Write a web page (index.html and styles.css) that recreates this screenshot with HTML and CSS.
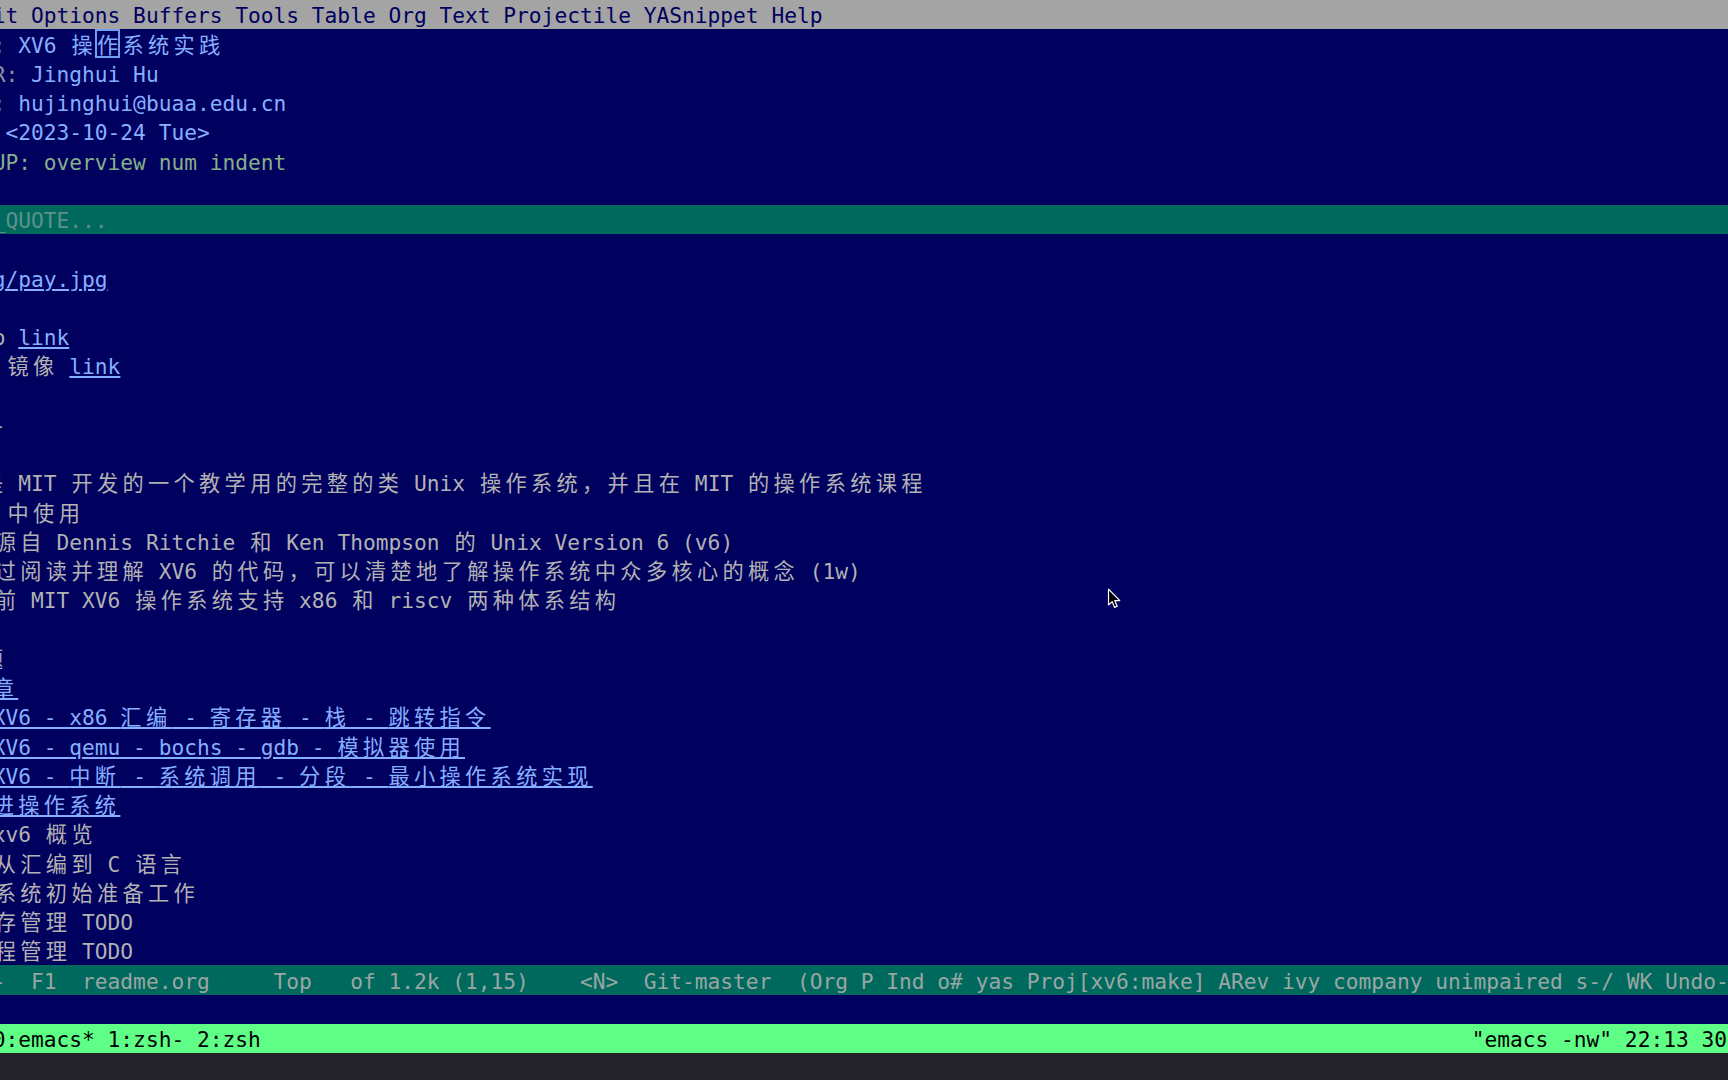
FILE: index.html
```html
<!DOCTYPE html>
<html lang="zh">
<head>
<meta charset="utf-8">
<title>emacs - readme.org</title>
<link rel="stylesheet" href="styles.css">
</head>
<body>
<div class="row menu">it Options Buffers Tools Table Org Text Projectile YASnippet Help</div>
<div class="row"><span class="k">:</span> <span class="t">XV6 <span class="w">操</span><span class="cur"><span class="w">作</span></span><span class="w">系统实践</span></span></div>
<div class="row"><span class="k">R:</span> <span class="t">Jinghui Hu</span></div>
<div class="row"><span class="k">:</span> <span class="t">hujinghui@buaa.edu.cn</span></div>
<div class="row"> <span class="t">&lt;2023-10-24 Tue&gt;</span></div>
<div class="row"><span class="g">UP: overview num indent</span></div>
<div class="row"></div>
<div class="row quote"><span class="q">_QUOTE...</span></div>
<div class="row"></div>
<div class="row"><span class="a">g/pay.jpg</span></div>
<div class="row"></div>
<div class="row">o <span class="a">link</span></div>
<div class="row"> <span class="w">镜像</span> <span class="a">link</span></div>
<div class="row"></div>
<div class="row">-</div>
<div class="row"></div>
<div class="row shift"><span class="w">是</span> MIT <span class="w">开发的一个教学用的完整的类</span> Unix <span class="w">操作系统，并且在</span> MIT <span class="w">的操作系统课程</span></div>
<div class="row"> <span class="w">中使用</span></div>
<div class="row"><span class="w">源自</span> Dennis Ritchie <span class="w">和</span> Ken Thompson <span class="w">的</span> Unix Version 6 (v6)</div>
<div class="row"><span class="w">过阅读并理解</span> XV6 <span class="w">的代码，可以清楚地了解操作系统中众多核心的概念</span> (1w)</div>
<div class="row"><span class="w">前</span> MIT XV6 <span class="w">操作系统支持</span> x86 <span class="w">和</span> riscv <span class="w">两种体系结构</span></div>
<div class="row"></div>
<div class="row shift"><span class="h w">题</span></div>
<div class="row"><span class="a"><span class="w">章</span></span></div>
<div class="row"><span class="a">XV6 - x86 <span class="w">汇编</span> - <span class="w">寄存器</span> - <span class="w">栈</span> - <span class="w">跳转指令</span></span></div>
<div class="row"><span class="a">XV6 - qemu - bochs - gdb - <span class="w">模拟器使用</span></span></div>
<div class="row"><span class="a">XV6 - <span class="w">中断</span> - <span class="w">系统调用</span> - <span class="w">分段</span> - <span class="w">最小操作系统实现</span></span></div>
<div class="row"><span class="a"><span class="w">进操作系统</span></span></div>
<div class="row">xv6 <span class="w">概览</span></div>
<div class="row"><span class="w">从汇编到</span> C <span class="w">语言</span></div>
<div class="row"><span class="w">系统初始准备工作</span></div>
<div class="row"><span class="w">存管理</span> TODO</div>
<div class="row"><span class="w">程管理</span> TODO</div>
<div class="row status">-  F1  readme.org     Top   of 1.2k (1,15)    &lt;N&gt;  Git-master  (Org P Ind o# yas Proj[xv6:make] ARev ivy company unimpaired s-/ WK Undo-Tree</div>
<div class="row"></div>
<div class="row tmux"><span class="tl">0:emacs* 1:zsh- 2:zsh</span><span class="tr">"emacs -nw" 22:13 30</span></div>
<div class="outside"></div>
<svg class="pointer" width="14" height="22" viewBox="0 0 14 22" aria-hidden="true">
  <path d="M1.5 1.2 L1.5 17 L5.2 13.6 L7.6 19.4 L10.2 18.3 L7.8 12.6 L12.8 12.6 Z" fill="#000" stroke="#fff" stroke-width="1.2" stroke-linejoin="round"/>
</svg>
</body>
</html>
```
FILE: styles.css
```css
html, body {
  margin: 0;
  padding: 0;
}

body {
  position: relative;
  width: 1728px;
  height: 1080px;
  overflow: hidden;
  display: flex;
  flex-direction: column;
  background: #00005f;
  color: #b2b2b2;
  font-family: "DejaVu Sans Mono", "Noto Sans CJK SC", monospace;
  font-size: 21.21px;
}

.row {
  flex: none;
  height: 29.25px;
  box-sizing: border-box;
  padding-top: 3.4px;
  line-height: 25.85px;
  white-space: pre;
  text-indent: -7.3px;
  overflow: hidden;
}

.row.shift {
  text-indent: -20.07px;
}

.w {
  letter-spacing: 4.33px;
  margin-left: 2.1px;
  margin-right: -2.1px;
}

.menu {
  background: #a4a4a4;
  color: #00005f;
}

.k {
  color: #8f8f9f;
}

.t {
  color: #87afff;
}

.g {
  color: #87af87;
}

.quote {
  background: #00695e;
}

.q {
  color: #5f918a;
}

.a {
  color: #87afff;
  text-decoration: underline;
  text-decoration-thickness: 1.5px;
  text-underline-offset: 2px;
}

.a .w {
  margin-left: 0;
  margin-right: 0;
}

.h {
  color: #a4b0d4;
}

.cur {
  display: inline-block;
  text-indent: 0;
  padding-top: 3.4px;
  margin-top: -3.4px;
  box-shadow: inset 0 0 0 2px #6f9ff0;
}

.cur .w {
  margin-left: 0;
  margin-right: 0;
  padding-left: 2.1px;
  letter-spacing: 2.23px;
}

.status {
  background: #00695e;
  color: #9aa6a2;
}

.tmux {
  display: flex;
  justify-content: space-between;
  padding-right: 1px;
  background: #5fff87;
  color: #000;
  text-indent: 0;
}

.tl {
  margin-left: -7.3px;
}

.outside {
  flex: 1;
  background: #232329;
}

.pointer {
  position: absolute;
  left: 1107px;
  top: 588px;
}
```
